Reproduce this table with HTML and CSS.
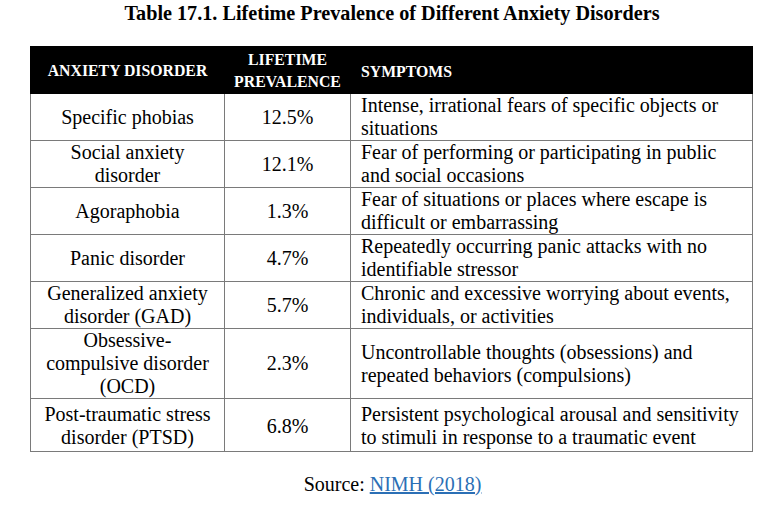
FILE: index.html
```html
<!DOCTYPE html>
<html>
<head>
<meta charset="utf-8">
<link rel="stylesheet" href="styles.css">
</head>
<body>
<div class="page">
  <h1 class="title">Table 17.1. Lifetime Prevalence of Different Anxiety Disorders</h1>
  <table class="prev-table">
    <colgroup>
      <col class="c1"><col class="c2"><col class="c3">
    </colgroup>
    <thead>
      <tr>
        <th class="h-center">ANXIETY DISORDER</th>
        <th class="h-center">LIFETIME<br>PREVALENCE</th>
        <th class="h-left">SYMPTOMS</th>
      </tr>
    </thead>
    <tbody>
      <tr><td class="center">Specific phobias</td><td class="center">12.5%</td><td>Intense, irrational fears of specific objects or situations</td></tr>
      <tr><td class="center">Social anxiety disorder</td><td class="center">12.1%</td><td>Fear of performing or participating in public and social occasions</td></tr>
      <tr><td class="center">Agoraphobia</td><td class="center">1.3%</td><td>Fear of situations or places where escape is difficult or embarrassing</td></tr>
      <tr><td class="center">Panic disorder</td><td class="center">4.7%</td><td>Repeatedly occurring panic attacks with no identifiable stressor</td></tr>
      <tr><td class="center">Generalized anxiety disorder (GAD)</td><td class="center">5.7%</td><td>Chronic and excessive worrying about events, individuals, or activities</td></tr>
      <tr><td class="center">Obsessive-<br>compulsive disorder (OCD)</td><td class="center">2.3%</td><td>Uncontrollable thoughts (obsessions) and repeated behaviors (compulsions)</td></tr>
      <tr class="last-row"><td class="center">Post-traumatic stress disorder (PTSD)</td><td class="center">6.8%</td><td>Persistent psychological arousal and sensitivity to stimuli in response to a traumatic event</td></tr>
    </tbody>
  </table>
  <p class="source">Source: <a href="#" class="src-link">NIMH (2018)</a></p>
</div>
</body>
</html>
```
FILE: styles.css
```css
html, body {
  margin: 0;
  padding: 0;
  background: #ffffff;
}
.page {
  width: 768px;
  height: 510px;
  font-family: "Liberation Serif", "Times New Roman", serif;
  color: #000;
  display: flex;
  flex-direction: column;
  align-items: center;
}
.title {
  margin: 2px 0 0 0;
  font-size: 20.2px;
  line-height: 23px;
  font-weight: bold;
  height: 44px;
  padding-left: 16px;
}
.prev-table {
  border-collapse: collapse;
  width: 722px;
  margin-left: 15px;
  table-layout: fixed;
}
.c1 { width: 194px; }
.c2 { width: 126px; }
.c3 { width: 402px; }
.prev-table th {
  background: #000;
  color: #fff;
  font-size: 15.8px;
  font-weight: bold;
  line-height: 22px;
  height: 47px;
  padding: 2px 2px 0 2px;
  border: 1px solid #000;
  vertical-align: middle;
  box-sizing: border-box;
}
.h-center { text-align: center; }
.prev-table th.h-left { text-align: left; padding-left: 10px; padding-top: 4px; }
.prev-table td {
  border: 1px solid #7a7a7a;
  font-size: 20px;
  line-height: 23px;
  padding: 0 4px 0 10px;
  vertical-align: middle;
}
.prev-table td.center {
  text-align: center;
  padding: 0 9px;
}
.prev-table .last-row td {
  padding-top: 4px;
  padding-bottom: 2px;
}
.source {
  margin: 21px 0 0 17px;
  font-size: 20px;
  line-height: 23px;
}
.src-link {
  color: #2b6fb5;
  text-decoration: underline;
}
```
